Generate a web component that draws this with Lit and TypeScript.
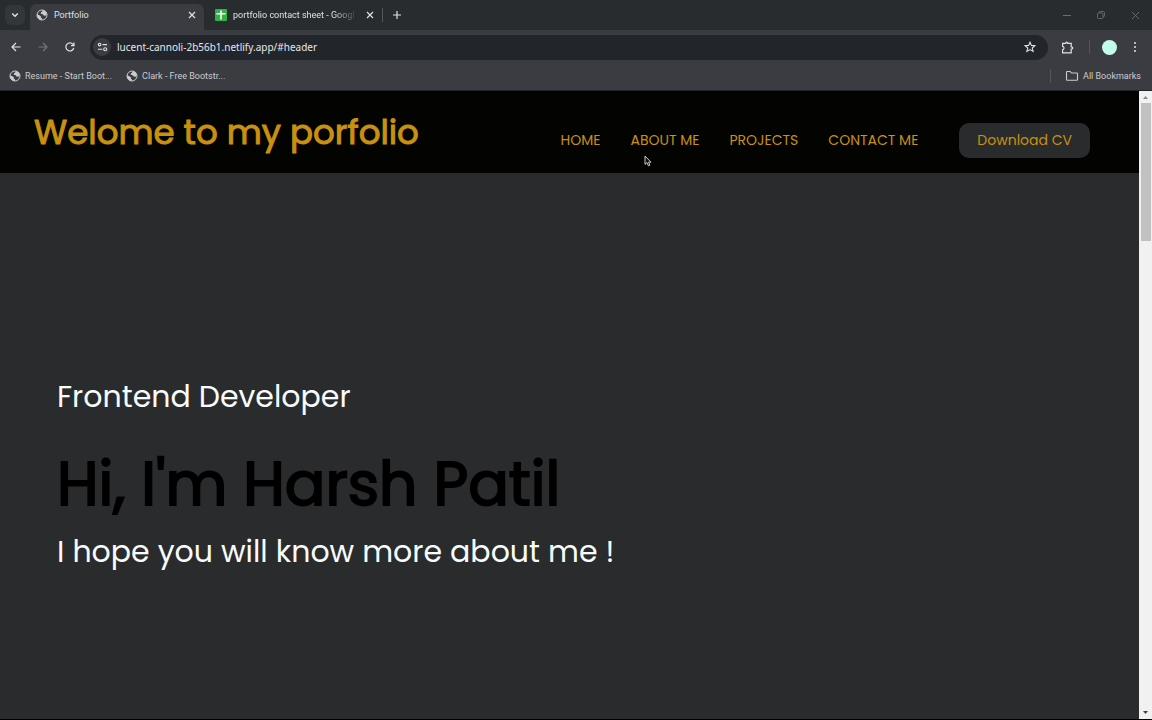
import { LitElement, html, css } from "lit";
import { customElement } from "lit/decorators.js";

const globe = html`<svg class="globe" viewBox="0 0 12 12" aria-hidden="true">
  <circle cx="6" cy="6" r="5" fill="none" stroke="#c9cbcf" stroke-width="1" />
  <path d="M6.6 1.2 6.2 2.6 4.8 3.4 4.8 4.8 6.8 5.2 7.6 6.4 9.6 6.8 10.8 5.2 10 2.8 8.4 1.4zM1 5.2 3.4 6.2 5 7.4 4.8 8.6 6 9.4 6 11 3.4 10.6 1.2 8z" fill="#c9cbcf" />
</svg>`;

const cross = html`<svg width="8" height="8" viewBox="0 0 8 8" fill="none" stroke="currentColor" stroke-width="1.2" aria-hidden="true">
  <path d="M1 1l6 6M7 1L1 7" />
</svg>`;

@customElement("browser-chrome")
export class BrowserChrome extends LitElement {
  static styles = css`
    :host {
      display: block;
      flex: none;
      background: #3b3c42;
      color: #dfe1e5;
      font: 9px/16px Roboto, "Open Sans", sans-serif;
    }
    button {
      display: grid;
      place-items: center;
      padding: 0;
      border: 0;
      background: none;
      color: inherit;
      font: inherit;
      width: 20px;
      height: 20px;
      flex: none;
    }
    svg {
      display: block;
      flex: none;
    }
    .tabs {
      display: flex;
      align-items: stretch;
      height: 30px;
      background: #292c2f;
    }
    .corner {
      display: flex;
      align-items: center;
      padding: 0 5px;
      width: 20px;
    }
    .search {
      background: #34373a;
      border-radius: 6px;
    }
    .tab {
      display: flex;
      align-items: center;
      gap: 6px;
      width: 161px;
      padding: 0 6px;
    }
    .tab.active {
      width: 162px;
      margin-top: 4px;
      padding-bottom: 4px;
      border-radius: 7px 7px 0 0;
      background: #3b3c42;
    }
    .tab.other {
      padding-left: 11px;
    }
    .label {
      flex: 1;
      min-width: 0;
      white-space: nowrap;
    }
    .fade {
      mask-image: linear-gradient(90deg, #000 80%, transparent);
    }
    .tab button {
      width: 12px;
    }
    .globe {
      width: 12px;
      height: 12px;
    }
    .rule {
      width: 1px;
      height: 14px;
      background: #54565c;
      align-self: center;
    }
    .new {
      align-self: center;
      margin-left: 4px;
    }
    .window {
      display: flex;
      align-items: center;
      gap: 14px;
      margin-left: auto;
      padding-right: 7px;
      color: #6b6e71;
    }
    .toolbar {
      display: flex;
      align-items: center;
      gap: 7px;
      height: 34px;
      padding: 0 11px 0 6px;
    }
    .dim {
      color: #74767b;
    }
    .address {
      display: flex;
      align-items: center;
      flex: 1;
      gap: 6px;
      height: 25px;
      margin-left: 3px;
      padding: 0 8px 0 3px;
      border-radius: 13px;
      background: #22252b;
    }
    .site {
      border-radius: 50%;
      background: #3b3c42;
      width: 18px;
      height: 18px;
    }
    .address input {
      flex: 1;
      min-width: 0;
      padding: 0;
      border: 0;
      outline: 0;
      background: none;
      color: #e6e8eb;
      font: 10px/16px "Noto Sans", "Open Sans", sans-serif;
    }
    .actions {
      display: flex;
      align-items: center;
      gap: 12px;
      padding-left: 2px;
    }
    .avatar {
      width: 15px;
      height: 15px;
      border-radius: 50%;
      background: #c4fcec;
    }
    .more {
      width: 12px;
    }
    .bookmarks {
      display: flex;
      align-items: center;
      gap: 14px;
      box-sizing: border-box;
      height: 26px;
      padding: 0 11px 3px 9px;
      color: #c9cbcf;
    }
    .bookmarks a {
      display: flex;
      align-items: center;
      gap: 4px;
      color: inherit;
      text-decoration: none;
      white-space: nowrap;
    }
    .bookmarks .rule {
      margin-left: auto;
    }
  `;

  render() {
    return html`
      <div class="tabs">
        <div class="corner">
          <button class="search" aria-label="Search tabs">
            <svg width="8" height="6" viewBox="0 0 8 6" fill="none" stroke="currentColor" stroke-width="1.4"><path d="M1.2 1.4 4 4.2 6.8 1.4" /></svg>
          </button>
        </div>
        <div class="tab active">
          ${globe}<span class="label">Portfolio</span>
          <button aria-label="Close Portfolio">${cross}</button>
        </div>
        <div class="tab other">
          <svg width="12" height="12" viewBox="0 0 12 12" aria-hidden="true">
            <rect width="12" height="12" rx="1" fill="#2fb344" />
            <path d="M6 1.5v9M1.5 4.7h9" stroke="#fff" stroke-width="1.6" />
          </svg>
          <span class="label fade">portfolio contact sheet - Googl</span>
          <button aria-label="Close contact sheet">${cross}</button>
        </div>
        <span class="rule"></span>
        <button class="new" aria-label="New tab">
          <svg width="10" height="10" viewBox="0 0 10 10" fill="none" stroke="currentColor" stroke-width="1.2"><path d="M5 1v8M1 5h8" /></svg>
        </button>
        <div class="window">
          <button aria-label="Minimize"><svg width="8" height="8" viewBox="0 0 8 8" stroke="currentColor"><path d="M0 4.5h8" /></svg></button>
          <button aria-label="Restore"><svg width="8" height="8" viewBox="0 0 8 8" fill="none" stroke="currentColor" stroke-width=".9"><rect x=".5" y="2" width="5.5" height="5.5" rx="1" /><path d="M2.2 2V1.4Q2.2.5 3.2.5H6.4Q7.5.5 7.5 1.6V4.8Q7.5 5.8 6 5.8" /></svg></button>
          <button aria-label="Close"><svg width="9" height="9" viewBox="0 0 9 9" stroke="currentColor" stroke-width=".9"><path d="M1 1l7 7M8 1L1 8" /></svg></button>
        </div>
      </div>
      <div class="toolbar">
        <button aria-label="Back"><svg width="10" height="10" viewBox="0 0 10 10" fill="none" stroke="currentColor" stroke-width="1.2"><path d="M9.5 5H1.2M5 1 1 5l4 4" /></svg></button>
        <button class="dim" aria-label="Forward"><svg width="10" height="10" viewBox="0 0 10 10" fill="none" stroke="currentColor" stroke-width="1.2"><path d="M.5 5h8.3M5 1l4 4-4 4" /></svg></button>
        <button aria-label="Reload"><svg width="10" height="10" viewBox="0 0 10 10" fill="none" stroke="currentColor" stroke-width="1.2"><path d="M8.8 6A4 4 0 1 1 8 2.4L9 3.6M9 .6v3H6" /></svg></button>
        <div class="address">
          <button class="site" aria-label="Site information">
            <svg width="11" height="10" viewBox="0 0 11 10" fill="none" stroke="currentColor" stroke-width="1.1"><circle cx="2.6" cy="2.6" r="1.3" /><path d="M5.5 2.6H10M1 7.2h4.4" /><circle cx="8.2" cy="7.2" r="1.5" /></svg>
          </button>
          <input aria-label="Address" value="lucent-cannoli-2b56b1.netlify.app/#header" />
          <button aria-label="Bookmark this page"><svg width="12" height="12" viewBox="0 0 12 12" fill="none" stroke="currentColor" stroke-width="1.1"><path d="M6 1.2 7.4 4.4 10.9 4.7 8.2 7 9.1 10.4 6 8.6 2.9 10.4 3.8 7 1.1 4.7 4.6 4.4z" /></svg></button>
        </div>
        <div class="actions">
          <button aria-label="Extensions"><svg width="13" height="13" viewBox="0 0 13 13" fill="none" stroke="currentColor" stroke-width="1.2"><path d="M1.6 2.4H4.8Q4.8 1.2 5.8 1.2T6.8 2.4H10.2V5.8Q11.8 5.8 11.8 6.9T10.2 8V11.8H1.6V8.8Q3 8.6 3 7.1T1.6 5.4z" /></svg></button>
          <span class="rule"></span>
          <button class="avatar" aria-label="Profile"></button>
          <button class="more" aria-label="Menu"><svg width="4" height="12" viewBox="0 0 4 12" fill="currentColor"><circle cx="2" cy="2" r="1" /><circle cx="2" cy="6" r="1" /><circle cx="2" cy="10" r="1" /></svg></button>
        </div>
      </div>
      <nav class="bookmarks" aria-label="Bookmarks">
        <a href="#resume">${globe}Resume - Start Boot...</a>
        <a href="#clark">${globe}Clark - Free Bootstr...</a>
        <span class="rule"></span>
        <a href="#all">
          <svg width="14" height="12" viewBox="0 0 14 12" fill="none" stroke="currentColor" stroke-width="1.1"><path d="M1.5 2.2Q1.5 1.5 2.2 1.5H5.2L6.5 3H11.8Q12.5 3 12.5 3.7V9.6Q12.5 10.3 11.8 10.3H2.2Q1.5 10.3 1.5 9.6z" /></svg>
          All Bookmarks
        </a>
      </nav>
    `;
  }
}

@customElement("portfolio-page")
export class PortfolioPage extends LitElement {
  static styles = css`
    :host {
      display: flex;
      flex-direction: column;
      flex: 1;
      min-width: 0;
      background: #2a2b2d;
      font-family: Poppins, Inter, sans-serif;
      color: #f8fcff;
    }
    header {
      display: flex;
      align-items: center;
      justify-content: space-between;
      height: 82px;
      padding: 0 49px 0 34px;
      background: #030301;
      color: #c8910f;
    }
    h1,
    h2,
    p {
      margin: 0;
    }
    h1 {
      font-weight: 400;
      font-size: 34px;
      line-height: 48px;
      -webkit-text-stroke: 1px currentColor;
    }
    nav {
      display: flex;
      align-items: center;
      gap: 30px;
      padding-top: 16px;
      font-size: 14px;
      line-height: 20px;
    }
    a {
      position: relative;
      color: inherit;
      text-decoration: none;
      white-space: nowrap;
    }
    .cv {
      margin-left: 11px;
      padding: 0 18px;
      height: 35px;
      border: 0;
      border-radius: 10px;
      background: #2a2b2d;
      color: inherit;
      font: inherit;
      white-space: nowrap;
    }
    .pointer {
      position: absolute;
      left: 14px;
      top: 25px;
    }
    .hero {
      display: flex;
      flex-direction: column;
      padding: 201px 57px 0;
    }
    .hero p {
      font-size: 30px;
      line-height: 45px;
    }
    h2 {
      margin: 20px 0 0;
      font-weight: 400;
      font-size: 60px;
      line-height: 90px;
      color: #000;
      -webkit-text-stroke: 2px currentColor;
    }
  `;

  render() {
    return html`
      <header>
        <h1>Welome to my porfolio</h1>
        <nav aria-label="Main">
          <a href="#header">HOME</a>
          <a href="#about">ABOUT ME
            <svg class="pointer" width="8" height="12" viewBox="0 0 8 12" fill="#111" stroke="#ddd" stroke-width=".9" aria-hidden="true"><path d="M1 1V9.4L3 7.6 4.4 10.8 5.8 10.2 4.5 7.2H7z" /></svg>
          </a>
          <a href="#projects">PROJECTS</a>
          <a href="#contact">CONTACT ME</a>
          <button class="cv">Download CV</button>
        </nav>
      </header>
      <main class="hero">
        <p>Frontend Developer</p>
        <h2>Hi, I'm Harsh Patil</h2>
        <p>I hope you will know more about me !</p>
      </main>
    `;
  }
}

@customElement("app-root")
export class AppRoot extends LitElement {
  static styles = css`
    :host {
      display: flex;
      flex-direction: column;
      height: 100vh;
      box-sizing: border-box;
      border-bottom: 1px solid #000;
      background: #2a2b2d;
      overflow: hidden;
    }
    .view {
      display: flex;
      flex: 1;
      min-height: 0;
      border-top: 1px solid #222426;
    }
    .scroll {
      display: flex;
      flex-direction: column;
      align-items: center;
      flex: none;
      width: 13px;
      background: #f1f1f1;
    }
    .thumb {
      width: 10px;
      height: 22%;
      margin-bottom: auto;
      background: #c1c1c1;
    }
    svg {
      display: block;
      flex: none;
    }
  `;

  render() {
    return html`
      <browser-chrome></browser-chrome>
      <div class="view">
        <portfolio-page></portfolio-page>
        <div class="scroll" aria-hidden="true">
          <svg width="13" height="12" viewBox="0 0 13 12"><path d="M4 8 6.5 5 9 8z" fill="#8a8a8a" /></svg>
          <div class="thumb"></div>
          <svg width="13" height="12" viewBox="0 0 13 12"><path d="M4 4 6.5 7 9 4z" fill="#444" /></svg>
        </div>
      </div>
    `;
  }
}
